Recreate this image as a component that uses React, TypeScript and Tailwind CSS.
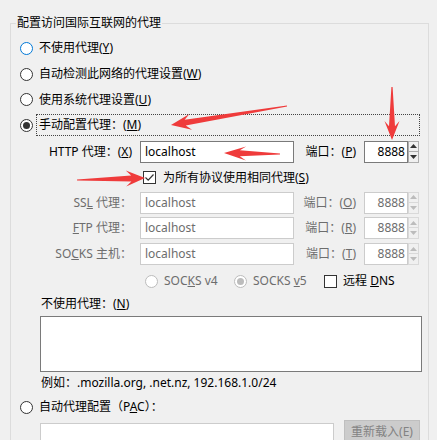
import React from 'react';

const font = { fontFamily: '"Noto Sans", "Noto Sans CJK SC", sans-serif' };

type RadioProps = { checked?: boolean; disabled?: boolean; focus?: boolean };

const Radio: React.FC<RadioProps> = ({ checked, disabled, focus }) => {
  const border = disabled ? 'border-[#bcbcbc]' : focus ? 'border-[#0078d7]' : 'border-[#333333]';
  const dot = disabled ? 'bg-[#bcbcbc]' : 'bg-[#333333]';
  return (
    <span className={`flex h-[13px] w-[13px] shrink-0 items-center justify-center rounded-full border bg-white ${border}`}>
      {checked && <span className={`h-[7px] w-[7px] rounded-full ${dot}`} />}
    </span>
  );
};

const Checkbox: React.FC<{ checked?: boolean }> = ({ checked }) => (
  <span className="flex h-[13px] w-[13px] shrink-0 items-center justify-center border border-[#333333] bg-white">
    {checked && (
      <svg width="11" height="11" viewBox="0 0 11 11">
        <path d="M1.5 5.5 L4.2 8.2 L9.5 2.5" fill="none" stroke="#333333" strokeWidth="1.2" />
      </svg>
    )}
  </span>
);

const Spinner: React.FC<{ disabled?: boolean }> = ({ disabled }) => {
  const c = disabled ? '#bcbcbc' : '#333333';
  const b = disabled ? 'border-[#d9d9d9]' : 'border-[#adadad]';
  return (
    <div className="flex h-[22px] w-[11px] flex-col">
      <div className={`flex h-[11px] items-center justify-center border bg-[#f0f0f0] ${b}`}>
        <svg width="7" height="4" viewBox="0 0 7 4">
          <path d="M0 4 L3.5 0 L7 4 Z" fill={c} />
        </svg>
      </div>
      <div className={`flex h-[11px] items-center justify-center border border-t-0 bg-[#f0f0f0] ${b}`}>
        <svg width="7" height="4" viewBox="0 0 7 4">
          <path d="M0 0 L3.5 4 L7 0 Z" fill={c} />
        </svg>
      </div>
    </div>
  );
};

type ProxyRowProps = {
  label: React.ReactNode;
  port: React.ReactNode;
  disabled?: boolean;
  height: string;
};

const ProxyRow: React.FC<ProxyRowProps> = ({ label, port, disabled, height }) => {
  const text = disabled ? 'text-[#6d6d6d]' : 'text-black';
  const border = disabled ? 'border-[#cccccc]' : 'border-[#7a7a7a]';
  return (
    <div className={`flex items-center ${height}`}>
      <div className={`w-[112px] text-right ${text}`}>{label}</div>
      <div className={`ml-[8px] flex h-[22px] w-[154px] items-center border bg-white pl-[4px] ${border} ${text}`}>
        localhost
      </div>
      <div className={`w-[62px] text-right ${text}`}>{port}</div>
      <div className={`ml-[8px] flex h-[22px] w-[44px] items-center justify-end border bg-white pr-[2px] ${border} ${text}`}>
        8888
      </div>
      <Spinner disabled={disabled} />
    </div>
  );
};

function arrowPoints(tx: number, ty: number, hx: number, hy: number, headLen: number, headHalf: number, neckHalf: number, tailHalf: number) {
  const dx = hx - tx;
  const dy = hy - ty;
  const len = Math.hypot(dx, dy);
  const ux = dx / len;
  const uy = dy / len;
  const nx = -uy;
  const ny = ux;
  const neckX = hx - ux * headLen * 0.72;
  const neckY = hy - uy * headLen * 0.72;
  const barbX = hx - ux * headLen;
  const barbY = hy - uy * headLen;
  const pts = [
    [tx + nx * tailHalf, ty + ny * tailHalf],
    [neckX + nx * neckHalf, neckY + ny * neckHalf],
    [barbX + nx * headHalf, barbY + ny * headHalf],
    [hx, hy],
    [barbX - nx * headHalf, barbY - ny * headHalf],
    [neckX - nx * neckHalf, neckY - ny * neckHalf],
    [tx - nx * tailHalf, ty - ny * tailHalf],
  ];
  return pts.map((p) => `${p[0].toFixed(1)},${p[1].toFixed(1)}`).join(' ');
}

const arrows = [
  [287, 106, 171, 125, 20, 8, 3, 0.6],
  [280, 154, 224, 153, 22, 7, 3, 0.6],
  [392, 87, 392, 140, 19, 7.5, 3, 0.6],
  [77, 180, 145, 178, 19, 8, 3, 0.6],
];

export default function App() {
  return (
    <div className="relative h-[440px] w-[437px] overflow-hidden bg-[#f0f0f0] text-[12px] leading-[16px] text-black" style={font}>
      <fieldset className="ml-[10px] mt-[15px] w-[419px] border border-[#dcdcdc]">
        <legend className="ml-[5px] px-[1px]">配置访问国际互联网的代理</legend>
        <div className="pl-[9px] pt-[4px]">
          <div className="flex h-[26px] items-center">
            <Radio focus />
            <span className="ml-[6px]">不使用代理(<u>Y</u>)</span>
          </div>
          <div className="flex h-[26px] items-center">
            <Radio />
            <span className="ml-[6px]">自动检测此网络的代理设置(<u>W</u>)</span>
          </div>
          <div className="flex h-[25px] items-center">
            <Radio />
            <span className="ml-[6px]">使用系统代理设置(<u>U</u>)</span>
          </div>
          <div className="flex h-[26px] items-center">
            <Radio checked />
            <span className="ml-[3px] flex h-[22px] w-[384px] items-center border border-dotted border-[#444444] pl-[2px]">
              手动配置代理：(<u>M</u>)
            </span>
          </div>

          <ProxyRow height="h-[27px]" label={<>HTTP 代理：(<u>X</u>)</>} port={<>端口：(<u>P</u>)</>} />

          <div className="flex h-[25px] items-center pl-[123px]">
            <Checkbox checked />
            <span className="ml-[7px]">为所有协议使用相同代理(<u>S</u>)</span>
          </div>

          <ProxyRow disabled height="h-[25px]" label={<>SS<u>L</u> 代理：</>} port={<>端口：(<u>O</u>)</>} />
          <ProxyRow disabled height="h-[26px]" label={<><u>F</u>TP 代理：</>} port={<>端口：(<u>R</u>)</>} />
          <ProxyRow disabled height="h-[26px]" label={<>SO<u>C</u>KS 主机：</>} port={<>端口：(<u>T</u>)</>} />

          <div className="flex h-[28px] items-center pl-[125px] text-[#6d6d6d]">
            <Radio disabled />
            <span className="ml-[6px] w-[70px]">SOC<u>K</u>S v4</span>
            <Radio disabled checked />
            <span className="ml-[6px] w-[71px]">SOCKS <u>v</u>5</span>
            <Checkbox />
            <span className="ml-[6px] text-black">远程 <u>D</u>NS</span>
          </div>

          <div className="flex h-[18px] items-center pl-[21px]">不使用代理：(<u>N</u>)</div>
          <div className="ml-[20px] mt-[3px] h-[56px] w-[382px] border border-[#7a7a7a] bg-white" />
          <div className="flex h-[22px] items-center pl-[21px]">例如：.mozilla.org, .net.nz, 192.168.1.0/24</div>

          <div className="flex h-[26px] items-center">
            <Radio />
            <span className="ml-[6px]">自动代理配置（P<u>A</u>C）：</span>
          </div>
          <div className="flex items-start pl-[20px]">
            <div className="mt-[3px] h-[22px] w-[294px] border border-[#cccccc] bg-white" />
            <div className="ml-[10px] flex h-[23px] w-[76px] items-center justify-center border border-[#bfbfbf] bg-[#cccccc] text-[#838383]">
              重新载入(E)
            </div>
          </div>
          <div className="h-[20px]" />
        </div>
      </fieldset>

      <svg className="pointer-events-none absolute left-0 top-0" width="437" height="440">
        {arrows.map((a, i) => (
          <polygon key={i} points={arrowPoints(a[0], a[1], a[2], a[3], a[4], a[5], a[6], a[7])} fill="#ef3b3b" />
        ))}
      </svg>
    </div>
  );
}
